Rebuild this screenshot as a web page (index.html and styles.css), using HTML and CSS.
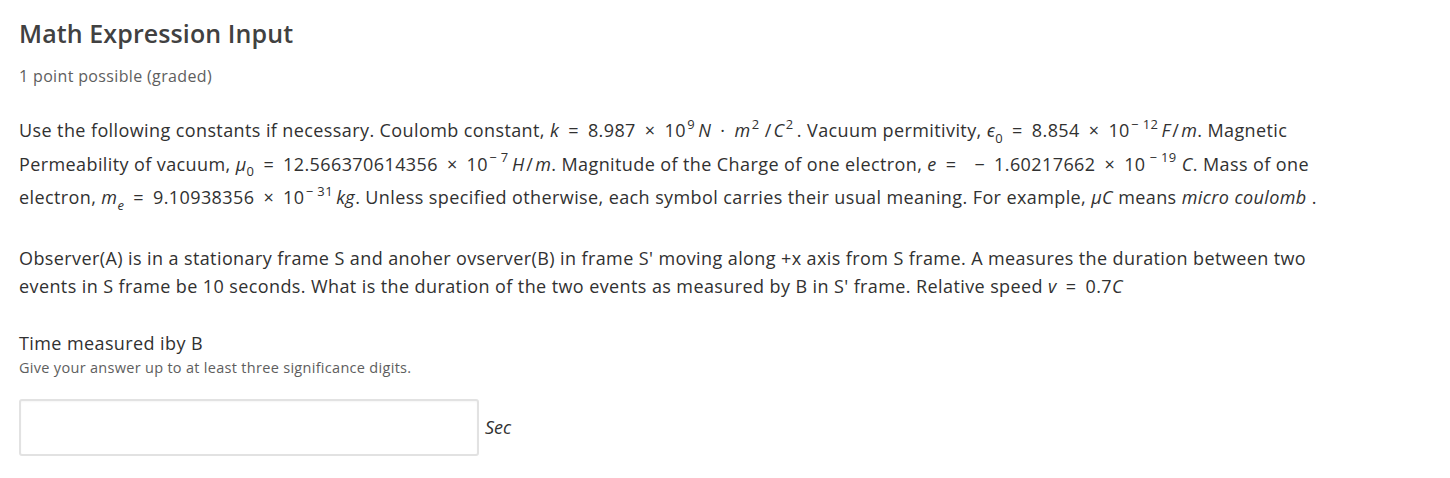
FILE: index.html
```html
<!DOCTYPE html>
<html lang="en">
<head>
<meta charset="utf-8">
<title>Math Expression Input</title>
<link rel="stylesheet" href="styles.css">
</head>
<body>
<div class="problem">
  <h3 class="problem-header">Math Expression Input</h3>
  <div class="problem-progress">1 point possible (graded)</div>

  <p class="constants">Use the following constants if necessary. Coulomb constant, <span class="mi">k</span><span class="mo">=</span>8.987<span class="mo">×</span>10<sup>9</sup><span class="mi">N</span><span class="mo">·</span><span class="mi">m</span><sup>2</sup><span class="sl">/</span><span class="mi">C</span><sup>2</sup>. Vacuum permitivity, <span class="mi">ϵ</span><sub>0</sub><span class="mo">=</span>8.854<span class="mo">×</span>10<sup>− 12</sup><span class="mi">F</span><span class="sl">/</span><span class="mi">m</span>. Magnetic<br>Permeability of vacuum, <span class="mi">μ</span><sub>0</sub><span class="mo">=</span>12.566370614356<span class="mo">×</span>10<sup>− 7</sup><span class="mi">H</span><span class="sl">/</span><span class="mi">m</span>. Magnitude of the Charge of one electron, <span class="mi">e</span><span class="mo">=</span><span class="mo">−</span>1.60217662<span class="mo">×</span>10<sup class="wide">− 19</sup><span class="mi">C</span>. Mass of one<br>electron, <span class="mi">m</span><sub class="mi">e</sub><span class="mo">=</span>9.10938356<span class="mo">×</span>10<sup>− 31</sup><span class="mi">kg</span>. Unless specified otherwise, each symbol carries their usual meaning. For example, <span class="mi">μC</span> means <span class="mi">micro</span> <span class="mi">coulomb</span> .</p>

  <p class="question">Observer(A) is in a stationary frame S and anoher ovserver(B) in frame S' moving along +x axis from S frame. A measures the duration between two<br>events in S frame be 10 seconds. What is the duration of the two events as measured by B in S' frame. Relative speed <span class="mi">v</span><span class="mo">=</span>0.7<span class="mi">C</span></p>

  <div class="field">
    <label class="field-label" for="answer">Time measured iby B</label>
    <div class="field-hint">Give your answer up to at least three significance digits.</div>
    <div class="input-row">
      <input id="answer" class="answer-input" type="text">
      <span class="unit">Sec</span>
    </div>
  </div>
</div>
</body>
</html>
```
FILE: styles.css
```css
html, body {
  margin: 0;
  padding: 0;
  background: #ffffff;
}

body {
  font-family: "Open Sans", "Noto Sans", "Liberation Sans", sans-serif;
  color: #313131;
}

.problem {
  padding: 13px 0 0 19px;
}

.problem-header {
  margin: 0;
  font-size: 25px;
  font-weight: 600;
  line-height: 40px;
  color: #414141;
  letter-spacing: 0.1px;
}

.problem-progress {
  margin-top: 13px;
  font-size: 16px;
  line-height: 20px;
  color: #5e5e5e;
  letter-spacing: 0.35px;
}

.constants {
  margin: 28px 0 0;
  font-size: 18px;
  line-height: 33.5px;
  white-space: nowrap;
  letter-spacing: 0.4px;
}

.question {
  margin: 29px 0 0;
  font-size: 18px;
  line-height: 28px;
  white-space: nowrap;
  letter-spacing: 0.4px;
}

.mi {
  font-style: italic;
}

.mo {
  margin: 0 0.5em;
}

.sl {
  margin: 0 0.1em;
}

sup, sub {
  font-size: 72%;
  line-height: 0;
  position: relative;
  vertical-align: baseline;
}

sup {
  top: -0.65em;
  margin-left: 0.1em;
  margin-right: 0.25em;
}

sup.wide {
  margin-left: 0.3em;
  margin-right: 0.4em;
}

sub {
  top: 0.45em;
}

.field {
  margin-top: 31px;
}

.field-label {
  display: block;
  font-size: 18px;
  line-height: 24px;
  color: #313131;
  letter-spacing: 0.4px;
}

.field-hint {
  margin-top: 3px;
  font-size: 14.5px;
  line-height: 20px;
  color: #5e5e5e;
  letter-spacing: 0.3px;
}

.input-row {
  display: flex;
  align-items: center;
  margin-top: 21px;
}

.answer-input {
  box-sizing: border-box;
  width: 460px;
  height: 57px;
  margin: 0;
  border: 2px solid #e2e2e2;
  border-radius: 3px;
  background: #ffffff;
  box-shadow: inset 0 1px 2px rgba(0, 0, 0, 0.04);
  font: inherit;
  padding: 0 10px;
}

.unit {
  margin-left: 6px;
  font-size: 18px;
  font-style: italic;
  color: #313131;
}
```
